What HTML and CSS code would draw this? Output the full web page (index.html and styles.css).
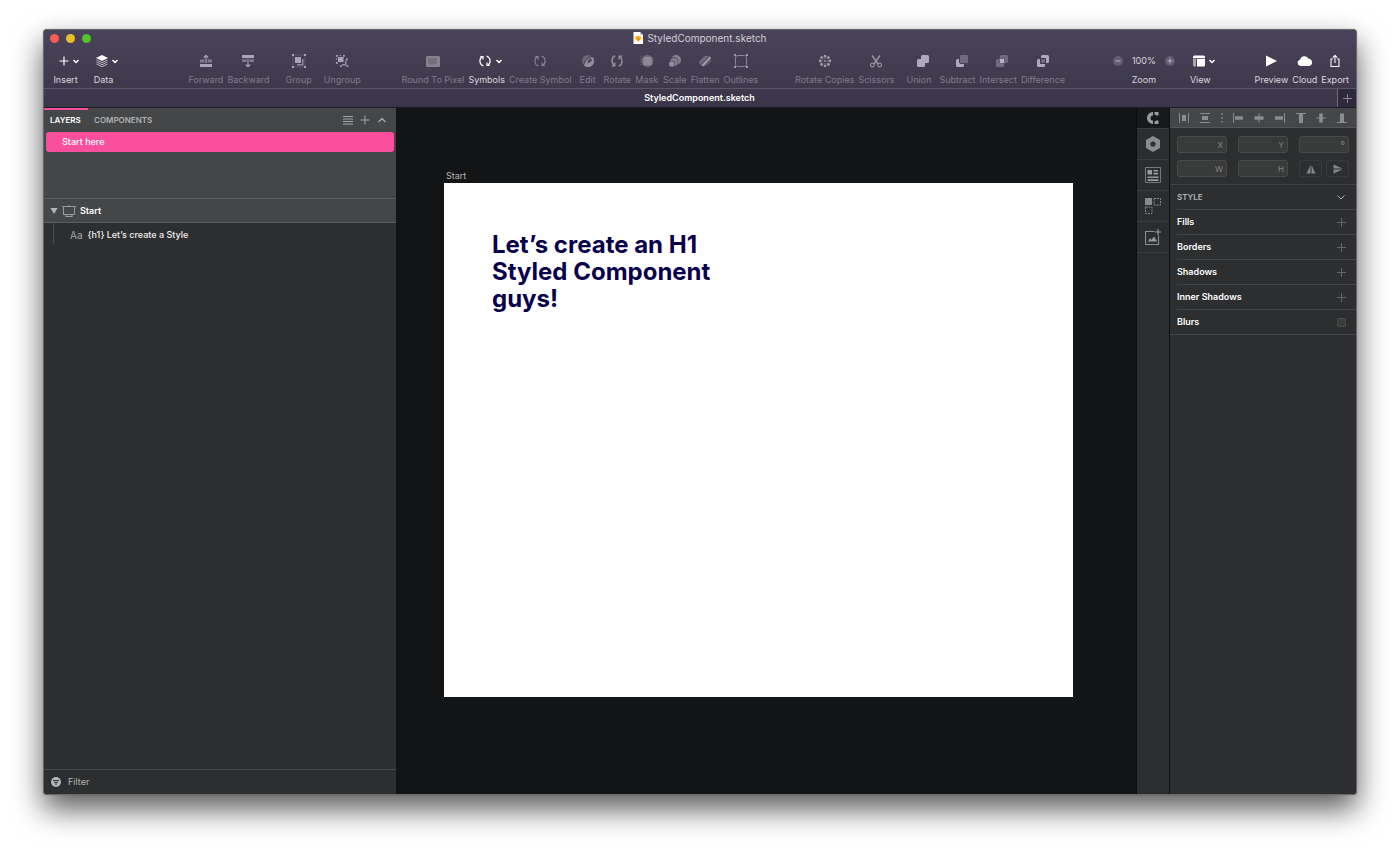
FILE: index.html
```html
<!DOCTYPE html>
<html lang="en">
<head>
<meta charset="utf-8">
<title>StyledComponent.sketch</title>
<link rel="stylesheet" href="styles.css">
</head>
<body>
<div class="window">
  <header class="chrome">
    <div class="titlebar">
      <div class="lights">
        <button class="light red" aria-label="Close"></button>
        <button class="light yellow" aria-label="Minimize"></button>
        <button class="light green" aria-label="Full screen"></button>
      </div>
      <div class="title">
        <svg width="10" height="12" viewBox="0 0 10 12"><path d="M.5 0H7l3 3v9H.5z" fill="#fff"/><path d="M7 0v3h3z" fill="#c9c5cf"/><path d="M3.200 4h4l1.600 2-3.600 3.700L1.600 6z" fill="#fbb41c"/><path d="M3.500 6h3.400L5.200 9.500z" fill="#f08a00"/></svg>
        <span>StyledComponent.sketch</span>
      </div>
    </div>
    <nav class="toolbar" aria-label="Toolbar">
      <button class="tool on menu"><span class="icon"><svg width="10" height="16" viewBox="0 0 10 16"><path d="M5 3.500v9M.5 8h9" stroke="#fff" stroke-width="1.200"/></svg><svg class="chev" width="8" height="16" viewBox="0 0 8 16"><path d="M1.500 7 4 9.500 6.500 7" fill="none" stroke="#fff" stroke-width="1.500"/></svg></span>Insert</button>
      <span class="gap-8"></span>
      <button class="tool on menu"><span class="icon"><svg width="12" height="16" viewBox="0 0 12 16"><path d="m6 2 6 3-6 3-6-3z" fill="#fff"/><path d="m.5 7 5.500 2.700L11.500 7M.5 9 6 11.700 11.500 9M.5 11 6 13.700l5.500-2.700" fill="none" stroke="#c4c0cd" stroke-width=".9"/></svg><svg class="chev" width="8" height="16" viewBox="0 0 8 16"><path d="M1.500 7 4 9.500 6.500 7" fill="none" stroke="#fff" stroke-width="1.500"/></svg></span>Data</button>
      <span class="stretch s66"></span>
      <button class="tool"><span class="icon"><svg width="14" height="16" viewBox="0 0 14 16"><path d="M1 11h12v3H1z" fill="#aaa4b8"/><path d="M1 6.500h4.500v3H1zM8.500 6.500H13v3H8.500z" fill="#807a8f"/><path d="M7 10V2.500M4.800 4.500 7 2.300l2.200 2.200" fill="none" stroke="#aaa4b8" stroke-width="1.100"/></svg></span>Forward</button>
      <button class="tool"><span class="icon"><svg width="14" height="16" viewBox="0 0 14 16"><path d="M1 2h12v3H1z" fill="#aaa4b8"/><path d="M1 6.300h4.500v2.800H1zM8.500 6.300H13v2.800H8.500z" fill="#807a8f"/><path d="M7 5.500v8M4.800 11.500 7 13.700l2.200-2.200" fill="none" stroke="#aaa4b8" stroke-width="1.100"/></svg></span>Backward</button>
      <span class="gap-12"></span>
      <button class="tool"><span class="icon"><svg width="16" height="16" viewBox="0 0 16 16"><path d="M2 2h12v12H2z" fill="none" stroke="#918b9f" stroke-width=".8" stroke-dasharray="1 1.400"/><path d="M1 1h2v2H1zM13 1h2v2h-2zM1 13h2v2H1zM13 13h2v2h-2z" fill="#aaa4b8"/><path d="M4 4h6v6H4z" fill="#aaa4b8"/><path d="M11 6h1.500v6.500H6V11h5z" fill="#8b8599"/></svg></span>Group</button>
      <span class="gap-8"></span>
      <button class="tool"><span class="icon"><svg width="16" height="16" viewBox="0 0 16 16"><path d="M4 4h5.500v5H4z" fill="#aaa4b8"/><path d="M8 11h3V7.500h1.500V12.500H8z" fill="#9690a4"/><path d="M2 2h1.800v1.800H2zM9 2h1.800v1.800H9zM2 9h1.800v1.800H2zM12 5.500h1.800v1.800H12zM6 12.200h1.800V14H6zM12.500 12.200h1.800V14h-1.800zM5.500 1.800h1.200V3H5.500zM1.800 5.500H3v1.200H1.800z" fill="#aaa4b8"/></svg></span>Ungroup</button>
      <span class="stretch s36"></span>
      <button class="tool"><span class="icon"><svg width="16" height="16" viewBox="0 0 16 16"><rect x="1" y="3" width="14" height="11" rx="1.500" fill="#86818f"/><path d="M4 5v6.500M6 5v6.500M8 5v6.500M10 5v6.500M3 6h9M3 8h9M3 10h9" stroke="#6b6675" stroke-width=".8"/></svg></span>Round To Pixel</button>
      <button class="tool on symbols"><span class="icon"><svg width="14" height="16" viewBox="0 0 14 16"><path d="M5.500 13C1 11.500.8 5.500 4.500 3.600M8.500 3C13 4.500 13.200 10.500 9.500 12.400" fill="none" stroke="#fff" stroke-width="1.200"/><path d="M2.300 3.500H5v3M11.700 12.500H9v-3" fill="none" stroke="#fff" stroke-width="1.200"/></svg><svg class="chev" width="8" height="16" viewBox="0 0 8 16"><path d="M1.500 7 4 9.500 6.500 7" fill="none" stroke="#fff" stroke-width="1.500"/></svg></span>Symbols</button>
      <button class="tool"><span class="icon"><svg width="14" height="16" viewBox="0 0 14 16"><path d="M5.500 13C1 11.500.8 5.500 4.500 3.600M8.500 3C13 4.500 13.200 10.500 9.500 12.400M2.300 3.500H5v3M11.700 12.500H9v-3" fill="none" stroke="#8a8497" stroke-width="1.100"/></svg></span>Create Symbol</button>
      <button class="tool"><span class="icon"><svg width="14" height="16" viewBox="0 0 14 16"><circle cx="7" cy="8" r="6" fill="#6c6777"/><path d="M13 7.500A6 6 0 0 1 3 12.500C4 8 7.500 4.500 12 4.200z" fill="#938e9b"/><path d="M2.500 12.500C3.500 7.500 7 4 11.500 3.300" fill="none" stroke="#48415a"/><path d="m6.300 10.300.8-2.800 2.300-2.200 1.800 1.800L9 9.500z" fill="#4a4459"/></svg></span>Edit</button>
      <button class="tool"><span class="icon"><svg width="14" height="16" viewBox="0 0 14 16"><path d="M5 2.800C1.500 4.500 1 9 3.800 12M9 13.200c3.500-1.700 4-6.200 1.200-9.200" fill="none" stroke="#918c9a" stroke-width="1.700"/><path d="M5.500 9v4.500H1zM8.500 7V2.500H13z" fill="#918c9a"/></svg></span>Rotate</button>
      <button class="tool"><span class="icon"><svg width="16" height="16" viewBox="0 0 16 16"><circle cx="8.500" cy="8" r="6" fill="#716c7b"/><path d="M4.500 4h8v8h-8z" fill="#8e8897"/><path d="M2 3v10" stroke="#716c7b" stroke-dasharray="1 1"/></svg></span>Mask</button>
      <button class="tool"><span class="icon"><svg width="14" height="16" viewBox="0 0 14 16"><circle cx="8" cy="7" r="5" fill="#858090"/><circle cx="5.800" cy="9" r="4.700" fill="#48415a"/><circle cx="5.800" cy="9.200" r="3.900" fill="#858090"/><circle cx="3.800" cy="11" r="3.400" fill="#48415a"/><circle cx="3.800" cy="11" r="2.700" fill="#938e9b"/></svg></span>Scale</button>
      <button class="tool"><span class="icon"><svg width="14" height="16" viewBox="0 0 14 16"><path d="M6.500 3H11l2 1.800V8l-5 5H4l-2.500-2V8z" fill="#6f6a7a"/><path d="m11.800 3.500 1.200 1.300L5.500 13.500l-2-1.600z" fill="#a09ba7"/><path d="M11 3.200 3 12M13.500 5.300 6.300 13.600" stroke="#48415a" stroke-width=".9"/></svg></span>Flatten</button>
      <button class="tool"><span class="icon"><svg width="16" height="16" viewBox="0 0 16 16"><rect x="2.500" y="2.500" width="11" height="11" rx="2" fill="none" stroke="#8a8497"/><path d="M1 1h2v2H1zM13 1h2v2h-2zM1 13h2v2H1zM13 13h2v2h-2z" fill="#9e98a9"/></svg></span>Outlines</button>
      <span class="stretch s32"></span>
      <button class="tool"><span class="icon"><svg width="14" height="16" viewBox="0 0 14 16"><g fill="#a39eab"><circle cx="7" cy="3.200" r="1.400"/><circle cx="7" cy="12.800" r="1.400"/><circle cx="2.200" cy="8" r="1.400"/><circle cx="11.800" cy="8" r="1.400"/><circle cx="3.600" cy="4.600" r="1.400"/><circle cx="10.400" cy="4.600" r="1.400"/><circle cx="3.600" cy="11.400" r="1.400"/><circle cx="10.400" cy="11.400" r="1.400"/><circle cx="7" cy="8" r=".9"/></g><circle cx="7" cy="8" r="2.500" fill="none" stroke="#8a8494" stroke-width=".9" stroke-dasharray="1 1"/></svg></span>Rotate Copies</button>
      <button class="tool"><span class="icon"><svg width="14" height="16" viewBox="0 0 14 16"><path d="m3 2.500 6 8.500M11 2.500 5 11" stroke="#9993a2" stroke-width="1.500"/><circle cx="3.400" cy="12" r="1.900" fill="none" stroke="#9993a2" stroke-width="1.100"/><circle cx="10.600" cy="12" r="1.900" fill="none" stroke="#9993a2" stroke-width="1.100"/></svg></span>Scissors</button>
      <span class="gap-8"></span>
      <button class="tool shape"><span class="icon"><svg width="14" height="16" viewBox="0 0 14 16"><rect x="5" y="2" width="8" height="8" rx="1.500" fill="#aea7bf"/><rect x="1" y="6" width="8" height="8" rx="1.500" fill="#aea7bf"/></svg></span>Union</button>
      <span class="gap-4"></span>
      <button class="tool shape"><span class="icon"><svg width="14" height="16" viewBox="0 0 14 16"><rect x="1" y="6" width="8" height="8" rx="1.500" fill="#aea7bf"/><rect x="4.500" y="1.500" width="9" height="9" rx="1.500" fill="#706a80" stroke="#463f56"/></svg></span>Subtract</button>
      <button class="tool shape"><span class="icon"><svg width="14" height="16" viewBox="0 0 14 16"><rect x="5" y="2" width="8" height="8" rx="1.500" fill="#706a80"/><rect x="1" y="6" width="8" height="8" rx="1.500" fill="#706a80"/><path d="M4.500 5.500h5v5h-5z" fill="#b9b3c6" stroke="#5d566c" stroke-width=".8"/></svg></span>Intersect</button>
      <button class="tool"><span class="icon"><svg width="14" height="16" viewBox="0 0 14 16"><rect x="5" y="2" width="8" height="8" rx="1.500" fill="#aea7bf"/><rect x="1" y="6" width="8" height="8" rx="1.500" fill="#aea7bf"/><path d="M4.500 5.500h5v5h-5z" fill="#706a80" stroke="#39334a" stroke-width="1"/></svg></span>Difference</button>
      <span class="stretch s43"></span>
      <div class="tool on zoom">
        <span class="icon">
          <button class="round" aria-label="Zoom out"><svg width="10" height="10" viewBox="0 0 10 10"><circle cx="5" cy="5" r="5" fill="#635d72"/><path d="M2.500 5h5" stroke="#bdb8c6"/></svg></button>
          <span class="percent">100%</span>
          <button class="round" aria-label="Zoom in"><svg width="10" height="10" viewBox="0 0 10 10"><circle cx="5" cy="5" r="5" fill="#635d72"/><path d="M2.500 5h5M5 2.500v5" stroke="#bdb8c6"/></svg></button>
        </span>Zoom</div>
      <span class="gap-8"></span>
      <button class="tool on menu"><span class="icon"><svg width="12" height="16" viewBox="0 0 12 16"><path d="M0 4q0-1.500 1.500-1.500h9Q12 2.500 12 4v1.300H0z" fill="#fff"/><path d="M0 6h3v7.500H1.500Q0 13.500 0 12z" fill="#aaa5b3"/><path d="M4 6h8v6q0 1.500-1.500 1.500H4z" fill="#fff"/></svg><svg class="chev" width="8" height="16" viewBox="0 0 8 16"><path d="M1.500 7 4 9.500 6.500 7" fill="none" stroke="#fff" stroke-width="1.500"/></svg></span>View</button>
      <span class="stretch s36"></span>
      <button class="tool on"><span class="icon"><svg width="12" height="16" viewBox="0 0 12 16"><path d="M1 2.500v11L12 8z" fill="#fff"/></svg></span>Preview</button>
      <button class="tool on"><span class="icon"><svg width="16" height="16" viewBox="0 0 16 16"><path d="M3.500 13a3.200 3.200 0 0 1-.4-6.300A4.600 4.600 0 0 1 11.700 5.800a3.700 3.700 0 0 1 .8 7.200z" fill="#fff"/></svg></span>Cloud</button>
      <button class="tool on"><span class="icon"><svg width="12" height="16" viewBox="0 0 12 16"><path d="M4 6H2v7.500h8V6H8M6 10V2.500M3.800 4.600 6 2.400l2.200 2.200" fill="none" stroke="#f4f2f7" stroke-width="1.100"/></svg></span>Export</button>
    </nav>
    <div class="tabs">
      <button class="doc-tab">StyledComponent.sketch</button>
      <button class="new-tab" aria-label="New tab"><svg width="11" height="11" viewBox="0 0 11 11"><path d="M5.500 1v9M1 5.500h9" stroke="#8a8494"/></svg></button>
    </div>
  </header>

  <main class="work">
    <aside class="layers">
      <section class="pages">
        <div class="pages-head">
          <button class="side-tab current">LAYERS</button>
          <button class="side-tab">COMPONENTS</button>
          <span class="head-actions">
            <button aria-label="List pages"><svg width="10" height="10" viewBox="0 0 10 10"><path d="M0 1.500h10M0 4h10M0 6.500h10M0 9h10" stroke="#a4a5a6"/></svg></button>
            <button aria-label="Add page"><svg width="10" height="10" viewBox="0 0 10 10"><path d="M5 .5v9M.5 5h9" stroke="#a4a5a6"/></svg></button>
            <button aria-label="Collapse"><svg width="10" height="10" viewBox="0 0 10 10"><path d="M1.500 7 5 3.500 8.500 7" fill="none" stroke="#b5b6b7" stroke-width="1.100"/></svg></button>
          </span>
        </div>
        <button class="page">Start here</button>
      </section>
      <button class="artboard-row">
        <svg width="8" height="8" viewBox="0 0 8 8"><path d="M.5 1h7L4 7z" fill="#b5b6b7"/></svg>
        <svg width="14" height="12" viewBox="0 0 14 12"><path d="M1.500 1.500h11v8h-11zM4 9.500v2M10 9.500v2M3.500 11.500h7M0 1.500h1M13 1.500h1M7 0v1" fill="none" stroke="#a4a5a6" stroke-width=".9"/></svg>
        <span>Start</span>
      </button>
      <button class="layer-row"><span class="aa">Aa</span><span>{h1} Let’s create a Style</span></button>
      <div class="filter">
        <svg width="10" height="10" viewBox="0 0 10 10"><circle cx="5" cy="5" r="5" fill="#b5b6b7"/><path d="M2 3.500h6M3 5.300h4M4 7h2" stroke="#333436"/></svg>
        <input type="text" placeholder="Filter" aria-label="Filter">
      </div>
    </aside>

    <section class="canvas" aria-label="Canvas">
      <span class="board-name">Start</span>
      <article class="board"><h1>Let’s create an H1 Styled Component guys!</h1></article>
    </section>

    <nav class="strip" aria-label="Plugins">
      <button class="craft" aria-label="Craft"><svg width="12" height="12" viewBox="0 0 12 12"><path d="M6 0v3.500A2.500 2.500 0 0 0 6 8.500V12A6 6 0 0 1 6 0zM7.500 0H11.500v3.500H9.500L7.500 2.500zM7.500 12h4V8.500h-2L7.500 9.500z" fill="#9a9b9c"/></svg></button>
      <button aria-label="Plugin settings"><svg width="16" height="18" viewBox="0 0 16 18"><path d="m8 1 7 4v8l-7 4-7-4V5z" fill="#8a8b8c"/><circle cx="8" cy="9" r="2.600" fill="#2c2d2f"/></svg></button>
      <button aria-label="Data"><svg width="16" height="16" viewBox="0 0 16 16"><path d="M.5.500h15v15H.5z" fill="none" stroke="#77787a"/><path d="M2.500 3H7v4.500H2.500zM8.500 3h4.500v1.600H8.500zM8.500 5.800h4.500v1.600H8.500zM2.500 9.500h11v1.600h-11zM2.500 12.300h11v1.600h-11z" fill="#9a9b9c"/></svg></button>
      <button aria-label="Duplicate"><svg width="16" height="16" viewBox="0 0 16 16"><path d="M0 0h7v7H0z" fill="#8a8b8c"/><path d="M9 .5h6.500V7H9zM.5 9H7v6.500H.5z" fill="none" stroke="#8a8b8c" stroke-dasharray="2 1"/></svg></button>
      <button aria-label="Add image"><svg width="16" height="16" viewBox="0 0 16 16"><path d="M9.500 2.500h-9v13h13v-9" fill="none" stroke="#8a8b8c" stroke-width="1.200"/><path d="M3 12.500 5 9l1.500 2L9 7.500l3 5z" fill="#9a9b9c"/><path d="M13 0v6M10 3h6" stroke="#9a9b9c" stroke-width="1.200"/></svg></button>
    </nav>

    <aside class="inspector">
      <div class="align">
        <button aria-label="Distribute horizontally"><svg width="12" height="12" viewBox="0 0 12 12"><path d="M1.500 1v10M10.500 1v10" stroke="#8b8c8d"/><path d="M4 3h4v6H4z" fill="#8b8c8d"/></svg></button>
        <button aria-label="Distribute vertically"><svg width="12" height="12" viewBox="0 0 12 12"><path d="M1 1.500h10M1 10.500h10" stroke="#8b8c8d"/><path d="M3 4h6v4H3z" fill="#8b8c8d"/></svg></button>
        <button aria-label="More"><svg width="4" height="12" viewBox="0 0 4 12"><path d="M1.200 1.500h1.600V3H1.200zM1.200 5.200h1.600v1.600H1.200zM1.200 9h1.600v1.500H1.200z" fill="#8b8c8d"/></svg></button>
        <button aria-label="Align left"><svg width="12" height="12" viewBox="0 0 12 12"><path d="M1.500 1v10" stroke="#8b8c8d"/><path d="M3 4.200h8v3.600H3z" fill="#8b8c8d"/></svg></button>
        <button aria-label="Align centre"><svg width="12" height="12" viewBox="0 0 12 12"><path d="M6 1v10" stroke="#8b8c8d"/><path d="M1.500 4.200h9v3.600h-9z" fill="#8b8c8d"/></svg></button>
        <button aria-label="Align right"><svg width="12" height="12" viewBox="0 0 12 12"><path d="M10.500 1v10" stroke="#8b8c8d"/><path d="M1 4.200h8v3.600H1z" fill="#8b8c8d"/></svg></button>
        <button aria-label="Align top"><svg width="12" height="12" viewBox="0 0 12 12"><path d="M1 1.500h10" stroke="#8b8c8d"/><path d="M4 2h4v9H4z" fill="#8b8c8d"/></svg></button>
        <button aria-label="Align middle"><svg width="12" height="12" viewBox="0 0 12 12"><path d="M1 6h10" stroke="#8b8c8d"/><path d="M4.200 1.500h3.600v9H4.200z" fill="#8b8c8d"/></svg></button>
        <button aria-label="Align bottom"><svg width="12" height="12" viewBox="0 0 12 12"><path d="M1 10.500h10" stroke="#8b8c8d"/><path d="M4 1.500h4V10H4z" fill="#8b8c8d"/></svg></button>
      </div>
      <div class="fields">
        <label class="field"><input type="text"><span>X</span></label>
        <label class="field"><input type="text"><span>Y</span></label>
        <label class="field"><input type="text"><span class="degree">°</span></label>
        <label class="field"><input type="text"><span>W</span></label>
        <label class="field"><input type="text"><span>H</span></label>
        <div class="flips">
          <button aria-label="Flip horizontally"><svg width="10" height="10" viewBox="0 0 10 10"><path d="M4.500 1v8.500H.5zM5.500 1v8.500h4z" fill="#858687"/></svg></button>
          <button aria-label="Flip vertically"><svg width="10" height="10" viewBox="0 0 10 10"><path d="M.5.500 9.500 4.500h-9zM.5 5.500h9l-9 4z" fill="#858687"/></svg></button>
        </div>
      </div>
      <h2 class="prop style-head">STYLE<button aria-label="Collapse style"><svg width="10" height="10" viewBox="0 0 10 10"><path d="M1.500 3.500 5 7l3.500-3.500" fill="none" stroke="#b5b6b7"/></svg></button></h2>
      <div class="prop">Fills<button aria-label="Add fill"><svg width="9" height="9" viewBox="0 0 9 9"><path d="M4.500 0v9M0 4.500h9" stroke="#646567"/></svg></button></div>
      <div class="prop">Borders<button aria-label="Add border"><svg width="9" height="9" viewBox="0 0 9 9"><path d="M4.500 0v9M0 4.500h9" stroke="#646567"/></svg></button></div>
      <div class="prop">Shadows<button aria-label="Add shadow"><svg width="9" height="9" viewBox="0 0 9 9"><path d="M4.500 0v9M0 4.500h9" stroke="#646567"/></svg></button></div>
      <div class="prop">Inner Shadows<button aria-label="Add inner shadow"><svg width="9" height="9" viewBox="0 0 9 9"><path d="M4.500 0v9M0 4.500h9" stroke="#646567"/></svg></button></div>
      <label class="prop last">Blurs<input type="checkbox"></label>
    </aside>
  </main>
</div>
</body>
</html>
```
FILE: styles.css
```css
* { box-sizing: border-box; }

body {
  margin: 0;
  height: 100vh;
  padding: 29px 43px 57px;
  background: #fff;
  font: 9px/12px Inter, "Liberation Sans", sans-serif;
  color: #f0f0f0;
}

button, input {
  margin: 0;
  padding: 0;
  border: 0;
  background: none;
  font: inherit;
  color: inherit;
}

svg { display: block; flex: none; }

.window {
  display: flex;
  flex-direction: column;
  height: 100%;
  overflow: hidden;
  border: 1px solid #6b6970;
  border-radius: 4px;
  background: #2d2e30;
  box-shadow: 0 0 1px rgba(0, 0, 0, .5), 0 14px 30px rgba(0, 0, 0, .65);
}

/* Title, toolbar and tabs */
.chrome {
  flex: none;
  background: linear-gradient(#4a4359, #3b3549);
  border-bottom: 1px solid #1d1b23;
}

.titlebar {
  display: grid;
  grid-template-columns: 1fr auto 1fr;
  align-items: center;
  height: 16px;
  padding: 0 6px;
}

.lights { display: flex; gap: 7px; }
.light { width: 9px; height: 9px; border-radius: 50%; }
.red { background: #fc5b53; }
.yellow { background: #e8c029; }
.green { background: #53c42b; }

.title {
  display: flex;
  align-items: center;
  gap: 4px;
  font-size: 10px;
  color: #d3d0d9;
}

.toolbar {
  display: flex;
  height: 42px;
  padding: 7px 5px 0 7px;
}

.tool {
  display: flex;
  flex-direction: column;
  align-items: center;
  gap: 5px;
  flex: none;
  min-width: 28px;
  padding: 0 2px;
  color: #7f7a8b;
  white-space: nowrap;
}

.tool.on { color: #dad7df; }
.tool.menu { padding: 0; }
.icon { display: flex; align-items: center; height: 16px; }
.chev { margin-left: 3px; }
.menu .icon { padding-left: 8px; }
.symbols .icon { padding-left: 8px; }
.shape .icon { padding-left: 8px; }
.zoom .icon { gap: 9px; }
.percent { font-size: 9px; }

.stretch { flex-basis: 0; }
.s66 { flex-grow: 66; }
.s36 { flex-grow: 36; }
.s32 { flex-grow: 32; }
.s43 { flex-grow: 43; }
.gap-4 { width: 4px; }
.gap-8 { width: 8px; }
.gap-12 { width: 12px; }

.tabs {
  display: flex;
  height: 19px;
  border-top: 1px solid #5b5569;
}

.doc-tab { flex: 1; padding-left: 18px; font-weight: 600; color: #fff; }

.new-tab {
  display: grid;
  place-items: center;
  width: 19px;
  border-left: 1px solid #716b7e;
  background: #2f2a3b;
}

/* Main area */
.work {
  flex: 1;
  display: grid;
  grid-template-columns: 353px 1fr 33px 187px;
  min-height: 0;
}

.layers {
  display: flex;
  flex-direction: column;
  background: #2d2e30;
  border-right: 1px solid #111213;
}

.pages { height: 91px; background: #454648; border-bottom: 1px solid #5b5c5e; }

.pages-head {
  display: flex;
  height: 24px;
  padding-right: 9px;
}

.side-tab {
  padding: 0 7px 2px 6px;
  border-top: 2px solid transparent;
  font-size: 8px;
  font-weight: 600;
  color: #b0b1b2;
}

.side-tab.current { width: 44px; text-align: left; border-color: #fb4f9d; color: #fff; }
.head-actions { display: flex; gap: 7px; margin-left: auto; align-items: center; }

.page {
  display: block;
  width: calc(100% - 4px);
  height: 20px;
  margin-left: 2px;
  padding-left: 16px;
  border-radius: 3px;
  background: #fa4f9d;
  color: #fff;
  font-weight: 500;
  text-align: left;
}

.artboard-row {
  display: flex;
  align-items: center;
  gap: 4px;
  height: 24px;
  padding-left: 6px;
  background: #454648;
  border-bottom: 1px solid #5b5c5e;
  font-weight: 600;
  color: #fff;
}

.layer-row {
  display: flex;
  align-items: center;
  gap: 5px;
  height: 21px;
  margin: 0 0 0 9px;
  padding: 3px 0 0 16px;
  border-left: 1px solid #4b4c4e;
  font-weight: 500;
}

.aa { color: #a4a5a6; font-size: 10px; font-weight: 400; }

.filter {
  display: flex;
  align-items: center;
  gap: 7px;
  height: 25px;
  margin-top: auto;
  padding-left: 7px;
  border-top: 1px solid #454648;
}

.filter input { flex: 1; min-width: 0; }
.filter input::placeholder { color: #b5b6b7; opacity: 1; }

.canvas {
  display: flex;
  flex-direction: column;
  padding: 62px 63px 97px 47px;
  background: #131415;
}

.board-name { padding: 0 0 1px 2px; color: #b5b6b7; }

.board {
  flex: 1;
  padding: 48px;
  background: #fff;
}

.board h1 {
  max-width: 240px;
  margin: 0;
  font-size: 24px;
  line-height: 27px;
  font-weight: 700;
  color: #09004c;
}

.strip {
  display: flex;
  flex-direction: column;
  border-left: 1px solid #0c0d0e;
  background: #2c2d2f;
}

.strip button {
  display: grid;
  place-items: center;
  height: 31px;
  border-bottom: 1px solid #3a3b3d;
}

.strip .craft { height: 21px; background: #18191a; }

.inspector { border-left: 1px solid #0f1011; background: #2d2e30; }

.align {
  display: flex;
  align-items: center;
  justify-content: space-between;
  height: 20px;
  padding: 0 8px;
  background: #454648;
  border-bottom: 1px solid #555658;
}

.fields {
  display: grid;
  grid-template-columns: repeat(3, minmax(0, 1fr));
  gap: 7px 11px;
  padding: 8px 7px 7px;
  border-bottom: 1px solid #424345;
}

.field {
  display: flex;
  align-items: center;
  height: 17px;
  padding-right: 3px;
  border: 1px solid #48494a;
  border-radius: 3px;
  background: #393a3a;
  font-size: 8px;
  color: #858687;
}

.field input { flex: 1; width: 0; min-width: 0; }
.degree { font-size: 10px; }
.flips { display: flex; gap: 4px; }

.flips button {
  flex: 1;
  display: grid;
  place-items: center;
  border: 1px solid #393a3c;
  border-radius: 3px;
}

.prop {
  display: flex;
  align-items: center;
  justify-content: space-between;
  height: 25px;
  margin: 0 0 0 7px;
  padding-right: 10px;
  border-bottom: 1px solid #424345;
  font-size: 9px;
  font-weight: 600;
  color: #fff;
}

.style-head { font-size: 8px; color: #b5b6b7; }
.last { margin: 0; padding-left: 7px; }

.prop input {
  appearance: none;
  width: 9px;
  height: 9px;
  border: 1px solid #4b4c4d;
  border-radius: 2px;
  background: #3b3c3c;
}
```
